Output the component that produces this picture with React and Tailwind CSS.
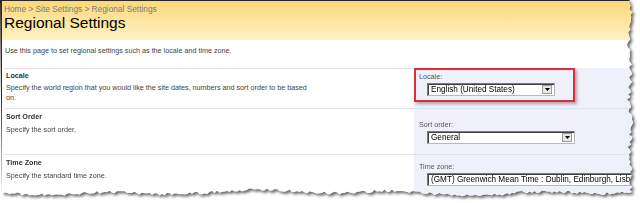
import React from "react";

const font = { fontFamily: '"Liberation Sans", Arial, sans-serif' };

// jagged "torn paper" outline for the screenshot border
function tornEdge() {
  let s = 11;
  const rnd = () => {
    s = (s * 16807) % 2147483647;
    return s / 2147483647;
  };
  const pts = ["0px 0px", "630px 0px"];
  for (let y = 2; y < 191; y += 2.5) {
    pts.push(`${(628 + rnd() * 4 + Math.sin(y / 9) * 1.2).toFixed(1)}px ${y}px`);
  }
  for (let x = 632; x >= 0; x -= 2.5) {
    const wave = Math.sin(x / 23) * 1.6 + Math.sin(x / 61) * 1.4;
    pts.push(`${x}px ${(191 + rnd() * 3 + wave).toFixed(1)}px`);
  }
  return `polygon(${pts.join(",")})`;
}

function Select({ value, width }) {
  return (
    <div
      className={`flex items-center h-[13px] bg-white border border-[#7a7a7a] border-b-[#b8b8b8] border-r-[#b8b8b8] shadow-[inset_1px_1px_0_#404040] ${width}`}
    >
      <span className="flex-1 pl-[3px] text-[8.2px] leading-[11px] text-black whitespace-nowrap overflow-hidden">
        {value}
      </span>
      <span className="shrink-0 w-[10px] h-[9px] mr-[2px] flex items-center justify-center bg-[#e6e6e6] border border-[#9c9c9c]">
        <svg width="5" height="3" viewBox="0 0 5 3">
          <path d="M0 0h5L2.5 3z" fill="#000" />
        </svg>
      </span>
    </div>
  );
}

function Label({ children }) {
  return <div className="text-[7.2px] leading-[9px] text-[#555]">{children}</div>;
}

function Heading({ children }) {
  return <div className="text-[7.2px] leading-[10px] font-bold text-[#333]">{children}</div>;
}

function Desc({ children }) {
  return <div className="text-[7.2px] leading-[10px] text-[#444]">{children}</div>;
}

export default function App() {
  return (
    <div className="w-[640px] h-[203px] bg-white overflow-hidden" style={font}>
      <div className="[filter:drop-shadow(2px_2px_1.5px_rgba(0,0,0,0.6))]">
        <div
          className="w-[640px] h-[200px] bg-white border-t border-l-2 border-[#2f2b1c] flex flex-col"
          style={{ clipPath: tornEdge() }}
        >
          <div className="h-[39px] shrink-0 bg-gradient-to-b from-[#fbd879] to-[#fff1c4] pl-[2px] pt-[3px]">
            <div className="text-[8.3px] leading-[10px] text-[#7a7a7a]">
              Home &gt; Site Settings &gt; Regional Settings
            </div>
            <div className="text-[15.5px] leading-[18px] text-black">Regional Settings</div>
          </div>

          <div className="h-[28px] shrink-0 pl-[3px] pt-[6px]">
            <div className="text-[7.2px] leading-[10px] text-[#444]">
              Use this page to set regional settings such as the locale and time zone.
            </div>
          </div>

          <div className="grid grid-cols-[410px_1fr] content-start pl-[2px]">
            {/* Locale */}
            <div className="h-[40px] border-t border-[#e3e3e3] pl-[2px] pt-[2px]">
              <Heading>Locale</Heading>
              <div className="mt-[2px]">
                <Desc>
                  Specify the world region that you would like the site dates, numbers and sort order to be based
                </Desc>
                <Desc>on.</Desc>
              </div>
            </div>
            <div className="h-[40px] bg-[#eef0fa]">
              <div className="w-[161px] h-[34px] border-2 border-[#d9303c] shadow-[2px_2px_3px_rgba(0,0,0,0.3)] pl-[3px] pt-[2px]">
                <Label>Locale:</Label>
                <div className="mt-[2px] ml-[8px]">
                  <Select value="English (United States)" width="w-[128px]" />
                </div>
              </div>
            </div>

            {/* Sort order */}
            <div className="h-[46px] border-t border-[#e3e3e3] pl-[2px] pt-[3px]">
              <Heading>Sort Order</Heading>
              <div className="mt-[3px]">
                <Desc>Specify the sort order.</Desc>
              </div>
            </div>
            <div className="h-[46px] bg-[#eef0fa] border-t border-[#dfe2ee] pl-[5px] pt-[11px]">
              <Label>Sort order:</Label>
              <div className="mt-[2px] ml-[8px]">
                <Select value="General" width="w-[148px]" />
              </div>
            </div>

            {/* Time zone */}
            <div className="h-[60px] border-t border-[#e3e3e3] pl-[2px] pt-[3px]">
              <Heading>Time Zone</Heading>
              <div className="mt-[3px]">
                <Desc>Specify the standard time zone.</Desc>
              </div>
            </div>
            <div className="h-[60px] bg-[#eef0fa] border-t border-[#dfe2ee] pl-[5px] pt-[7px] overflow-hidden">
              <Label>Time zone:</Label>
              <div className="mt-[2px] ml-[8px]">
                <Select value="(GMT) Greenwich Mean Time : Dublin, Edinburgh, Lisbon, London" width="w-[300px]" />
              </div>
            </div>
          </div>
        </div>
      </div>
    </div>
  );
}
